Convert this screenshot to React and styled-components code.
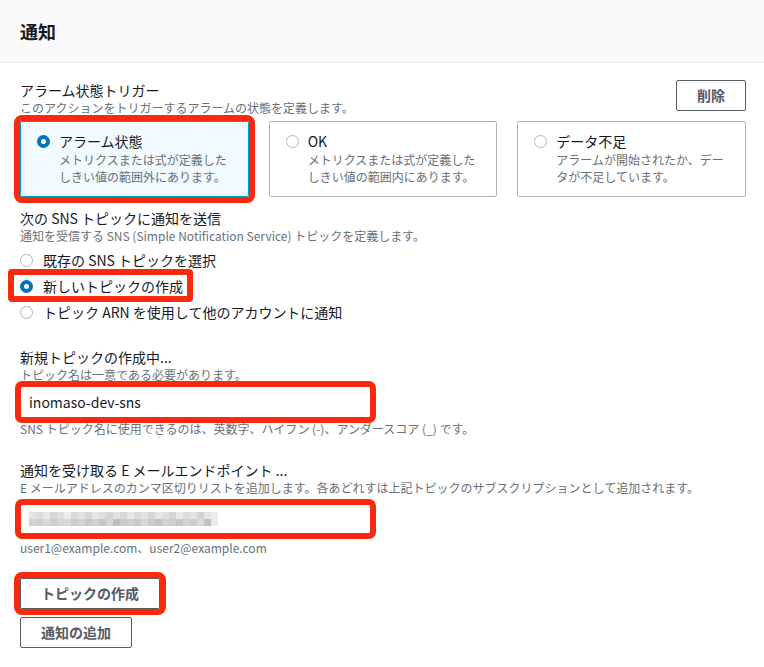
import React from 'react';
import styled, { createGlobalStyle, css } from 'styled-components';

const GlobalStyle = createGlobalStyle`
  html, body {
    margin: 0;
    padding: 0;
    background: #ffffff;
  }
  body {
    font-family: "Noto Sans CJK JP", "Noto Sans", sans-serif;
    color: #16191f;
  }
`;

const RED = '#f8290c';

const marked = css`
  outline: 6px solid ${RED};
  outline-offset: ${(p) => p.$offset ?? -1}px;
  border-radius: 2px;
`;

const Panel = styled.div`
  width: 764px;
  min-height: 667px;
  background: #ffffff;
`;

const Header = styled.div`
  height: 62px;
  display: flex;
  align-items: center;
  padding: 0 20px;
  background: #fafafa;
  border-bottom: 1px solid #eaeded;
`;

const Title = styled.h2`
  margin: 0;
  font-size: 18px;
  font-weight: 700;
  line-height: 22px;
`;

const Body = styled.div`
  padding: 17px 18px 20px 20px;
`;

const Section = styled.div`
  margin-top: ${(p) => p.$top || 0}px;
`;

const HeadRow = styled.div`
  display: flex;
  justify-content: space-between;
  align-items: flex-start;
`;

const Label = styled.div`
  font-size: 14px;
  line-height: 20px;
  color: #16191f;
`;

const Desc = styled.div`
  font-size: 12px;
  line-height: 16px;
  color: #687078;
  margin-top: ${(p) => p.$top || 0}px;
`;

const Button = styled.button`
  font-family: inherit;
  font-size: 14px;
  font-weight: 700;
  line-height: 20px;
  color: #545b64;
  background: #ffffff;
  border: 1px solid #545b64;
  border-radius: 2px;
  padding: 4px ${(p) => p.$px || 20}px 5px;
  cursor: pointer;
  ${(p) => p.$marked && marked}
`;

const Tiles = styled.div`
  display: grid;
  grid-template-columns: repeat(3, 1fr);
  gap: 20px;
  margin-top: 5px;
`;

const Tile = styled.div`
  display: flex;
  gap: 9px;
  padding: 9px 16px 9px 16px;
  min-height: 56px;
  border: 1px solid ${(p) => (p.$selected ? '#00a1c9' : '#aab7b8')};
  background: ${(p) => (p.$selected ? '#f1faff' : '#ffffff')};
  border-radius: 2px;
  ${(p) => p.$marked && marked}
`;

const TileText = styled.div`
  display: flex;
  flex-direction: column;
`;

const TileDesc = styled.div`
  font-size: 12px;
  line-height: 17px;
  color: #687078;
`;

const Radio = styled.span`
  flex: none;
  box-sizing: border-box;
  width: 13px;
  height: 13px;
  margin-top: 4px;
  border-radius: 50%;
  background: #ffffff;
  border: ${(p) => (p.$checked ? '4px solid #0073bb' : '1px solid #aab7b8')};
`;

const RadioList = styled.div`
  display: flex;
  flex-direction: column;
  align-items: flex-start;
  margin-top: 3px;
`;

const RadioRow = styled.div`
  position: relative;
  display: inline-flex;
  align-items: center;
  gap: 10px;
  height: 26px;
  font-size: 14px;
  line-height: 20px;

  ${Radio} {
    margin-top: 0;
  }

  ${(p) =>
    p.$marked &&
    css`
      &::after {
        content: '';
        position: absolute;
        top: -4px;
        bottom: -3px;
        left: -12px;
        right: -10px;
        border: 6px solid ${RED};
        border-radius: 4px;
        pointer-events: none;
      }
    `}
`;

const Field = styled.div`
  box-sizing: border-box;
  width: 351px;
  height: ${(p) => p.$h || 32}px;
  margin-top: ${(p) => p.$top || 3}px;
  display: flex;
  align-items: center;
  padding: 0 8px;
  border: 1px solid #aab7b8;
  background: #ffffff;
  ${marked}
`;

const TextInput = styled.input`
  border: none;
  outline: none;
  width: 100%;
  padding: 0;
  font-family: inherit;
  font-size: 14px;
  color: #16191f;
  background: transparent;
`;

const Mosaic = styled.div`
  display: grid;
  grid-template-columns: repeat(27, 7px);
  grid-auto-rows: 7px;
`;

const Pixel = styled.span`
  background: ${(p) => p.$shade};
`;

const Actions = styled.div`
  display: flex;
  flex-direction: column;
  align-items: flex-start;
  gap: 8px;
  margin-top: 22px;
`;

const shades = [
  '#e4e4e4', '#dcdcdc', '#e8e8e8', '#d6d6d6', '#e0e0e0', '#ececec', '#dadada', '#e3e3e3', '#d8d8d8',
  '#e6e6e6', '#dedede', '#d4d4d4', '#e2e2e2', '#d9d9d9', '#e7e7e7', '#dbdbdb', '#e1e1e1', '#d7d7d7',
  '#e5e5e5', '#dfdfdf', '#d5d5d5', '#e9e9e9', '#dddddd', '#e3e3e3', '#d3d3d3', '#e6e6e6', '#ededed',
  '#d2d2d2', '#cfcfcf', '#d8d8d8', '#cdcdcd', '#d5d5d5', '#dadada', '#cbcbcb', '#d3d3d3', '#c8c8c8',
  '#d1d1d1', '#c6c6c6', '#d4d4d4', '#bdbdbd', '#cacaca', '#d0d0d0', '#c9c9c9', '#d6d6d6', '#cccccc',
  '#c4c4c4', '#d2d2d2', '#cecece', '#c7c7c7', '#d3d3d3', '#cbcbcb', '#dadada', '#c2c2c2', '#ebebeb',
];

const states = [
  {
    label: 'アラーム状態',
    lines: ['メトリクスまたは式が定義した', 'しきい値の範囲外にあります。'],
    selected: true,
  },
  {
    label: 'OK',
    lines: ['メトリクスまたは式が定義した', 'しきい値の範囲内にあります。'],
  },
  {
    label: 'データ不足',
    lines: ['アラームが開始されたか、デー', 'タが不足しています。'],
  },
];

const topicOptions = [
  { label: '既存の SNS トピックを選択' },
  { label: '新しいトピックの作成', checked: true },
  { label: 'トピック ARN を使用して他のアカウントに通知' },
];

export default function App() {
  return (
    <Panel>
      <GlobalStyle />
      <Header>
        <Title>通知</Title>
      </Header>
      <Body>
        <Section>
          <HeadRow>
            <div>
              <Label>アラーム状態トリガー</Label>
              <Desc>このアクションをトリガーするアラームの状態を定義します。</Desc>
            </div>
            <Button>削除</Button>
          </HeadRow>
          <Tiles>
            {states.map((s) => (
              <Tile key={s.label} $selected={s.selected} $marked={s.selected} $offset={0}>
                <Radio $checked={s.selected} />
                <TileText>
                  <Label>{s.label}</Label>
                  {s.lines.map((l) => (
                    <TileDesc key={l}>{l}</TileDesc>
                  ))}
                </TileText>
              </Tile>
            ))}
          </Tiles>
        </Section>

        <Section $top={11}>
          <Label>次の SNS トピックに通知を送信</Label>
          <Desc>通知を受信する SNS (Simple Notification Service) トピックを定義します。</Desc>
          <RadioList>
            {topicOptions.map((o) => (
              <RadioRow key={o.label} $marked={o.checked}>
                <Radio $checked={o.checked} />
                {o.label}
              </RadioRow>
            ))}
          </RadioList>
        </Section>

        <Section $top={22}>
          <Label>新規トピックの作成中...</Label>
          <Desc>トピック名は一意である必要があります。</Desc>
          <Field>
            <TextInput readOnly defaultValue="inomaso-dev-sns" />
          </Field>
          <Desc $top={3}>SNS トピック名に使用できるのは、英数字、ハイフン (-)、アンダースコア (_) です。</Desc>
        </Section>

        <Section $top={23}>
          <Label>通知を受け取る E メールエンドポイント ...</Label>
          <Desc>E メールアドレスのカンマ区切りリストを追加します。各あどれすは上記トピックのサブスクリプションとして追加されます。</Desc>
          <Field $h={30} $top={8}>
            <Mosaic>
              {shades.map((c, i) => (
                <Pixel key={i} $shade={c} />
              ))}
            </Mosaic>
          </Field>
          <Desc $top={6}>user1@example.com、user2@example.com</Desc>
        </Section>

        <Actions>
          <Button $px={20} $marked $offset={0}>トピックの作成</Button>
          <Button $px={20}>通知の追加</Button>
        </Actions>
      </Body>
    </Panel>
  );
}
